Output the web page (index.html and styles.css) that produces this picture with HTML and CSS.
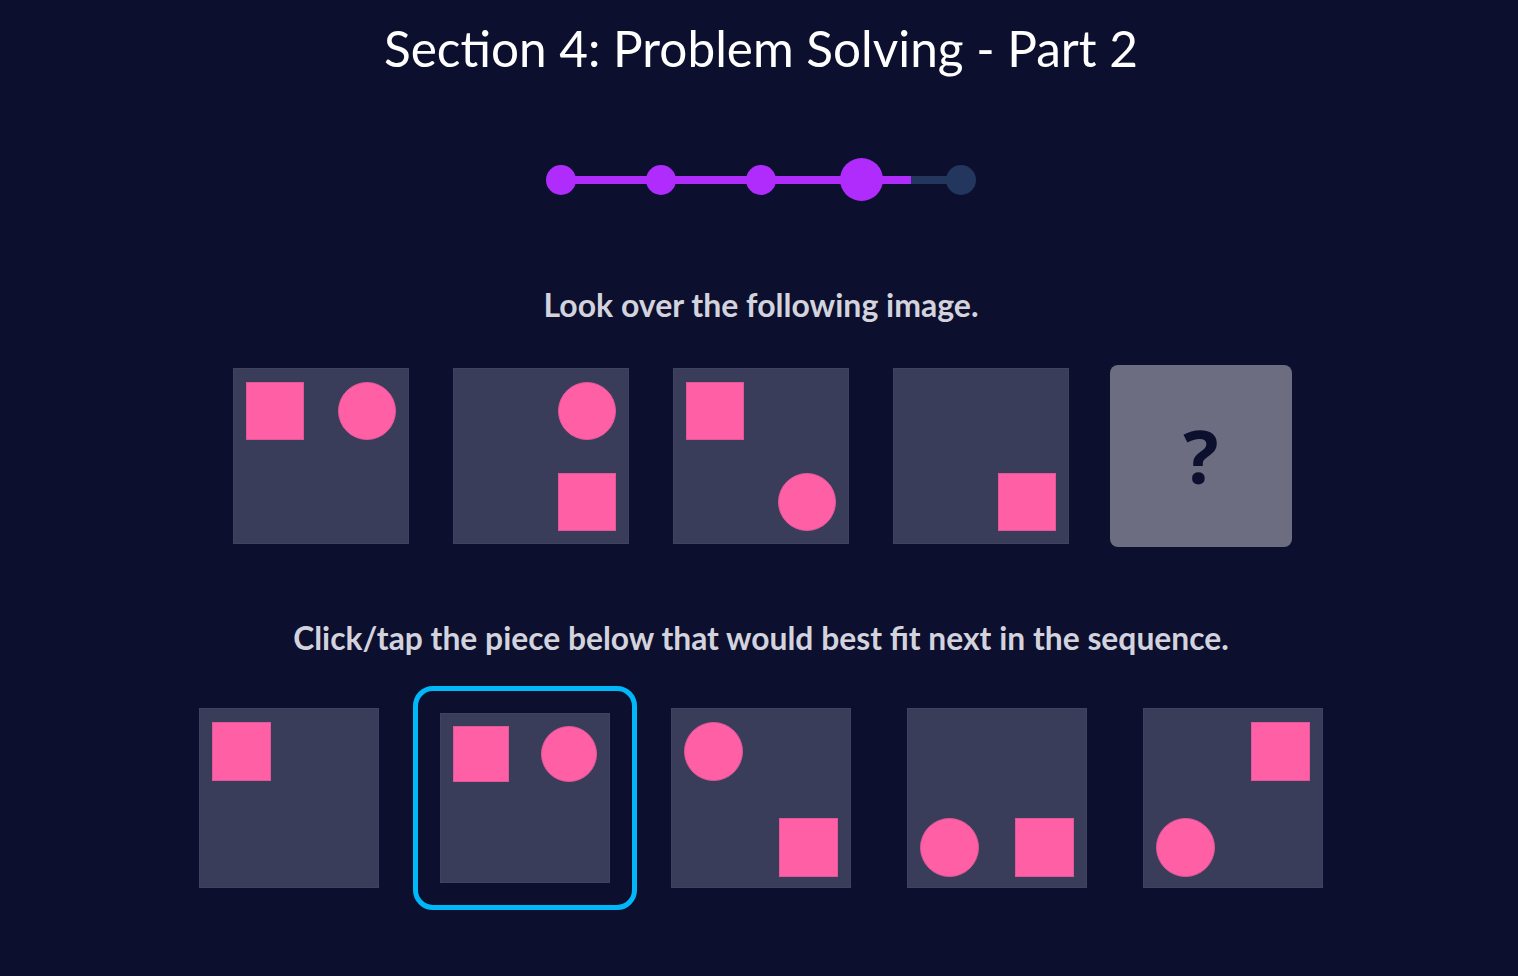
FILE: index.html
```html
<!DOCTYPE html>
<html lang="en">
<head>
<meta charset="utf-8">
<title>Section 4: Problem Solving - Part 2</title>
<link rel="stylesheet" href="styles.css">
</head>
<body>
<main class="page">
  <h1 class="title">Section 4: Problem Solving - Part 2</h1>

  <div class="progress">
    <span class="dot done"></span>
    <span class="dot done"></span>
    <span class="dot done"></span>
    <span class="dot current"></span>
    <span class="dot todo"></span>
  </div>

  <p class="prompt prompt-look">Look over the following image.</p>

  <div class="sequence">
    <div class="tile">
      <span class="shape square tl"></span>
      <span class="shape circle tr"></span>
    </div>
    <div class="tile">
      <span class="shape circle tr"></span>
      <span class="shape square br"></span>
    </div>
    <div class="tile">
      <span class="shape square tl"></span>
      <span class="shape circle br"></span>
    </div>
    <div class="tile">
      <span class="shape square br"></span>
    </div>
    <div class="tile tile-question"><span class="qmark">?</span></div>
  </div>

  <p class="prompt prompt-pick">Click/tap the piece below that would best fit next in the sequence.</p>

  <div class="options">
    <div class="option">
      <div class="tile tile-option">
        <span class="shape square tl"></span>
      </div>
    </div>
    <div class="option selected">
      <div class="tile tile-option">
        <span class="shape square tl"></span>
        <span class="shape circle tr"></span>
      </div>
    </div>
    <div class="option">
      <div class="tile tile-option">
        <span class="shape circle tl"></span>
        <span class="shape square br"></span>
      </div>
    </div>
    <div class="option">
      <div class="tile tile-option">
        <span class="shape circle bl"></span>
        <span class="shape square br"></span>
      </div>
    </div>
    <div class="option">
      <div class="tile tile-option">
        <span class="shape square tr"></span>
        <span class="shape circle bl"></span>
      </div>
    </div>
  </div>
</main>
</body>
</html>
```

FILE: styles.css
```css
html, body {
  margin: 0;
  padding: 0;
  background: #0c0f2e;
}

body {
  font-family: "Lato", "Noto Sans", "Liberation Sans", sans-serif;
  color: #ffffff;
  min-height: 976px;
}

.page {
  display: flex;
  flex-direction: column;
  align-items: center;
  padding-left: 4px;
}

.title {
  margin: 0;
  padding-top: 20px;
  font-size: 49.5px;
  line-height: 56px;
  font-weight: 400;
  color: #ffffff;
  letter-spacing: 0;
}

/* progress */
.progress {
  margin-top: 82px;
  width: 500px;
  height: 43px;
  display: grid;
  grid-template-columns: repeat(5, 100px);
  align-items: center;
  justify-items: center;
  background-image: linear-gradient(to right, #b02cfc 0, #b02cfc 350px, #23365e 350px, #23365e 400px);
  background-size: 400px 8px;
  background-position: center;
  background-repeat: no-repeat;
}

.dot {
  display: block;
  width: 30px;
  height: 30px;
  border-radius: 50%;
  background: #b02cfc;
}

.dot.current {
  width: 43px;
  height: 43px;
}

.dot.todo {
  background: #23365e;
}

/* prompts */
.prompt {
  margin: 0;
  font-weight: 700;
  color: #d3d3de;
  font-size: 32px;
  line-height: 34px;
}

.prompt-look {
  margin-top: 87px;
}

.prompt-pick {
  margin-top: 77px;
  font-size: 31.8px;
}

/* tiles */
.tile {
  box-sizing: border-box;
  width: 176px;
  height: 176px;
  padding: 13px 12px 12px 12px;
  background: #3a3d59;
  border: 1px solid #3f4261;
  display: grid;
  grid-template-columns: 58px 58px;
  grid-template-rows: 58px 58px;
  justify-content: space-between;
  align-content: space-between;
}

.sequence {
  margin-top: 46px;
  display: flex;
  gap: 44px;
  align-items: center;
}

.tile-question {
  width: 182px;
  height: 182px;
  margin: -3px;
  border-radius: 8px;
  background: #6c6d80;
  border: none;
  display: flex;
  align-items: center;
  justify-content: center;
  padding: 0;
}

.qmark {
  font-family: "Open Sans", "Noto Sans", sans-serif;
  font-weight: 700;
  font-size: 74px;
  line-height: 1;
  color: #0c0f2e;
}

.shape {
  display: block;
  background: #ff5fa5;
  border: 1px solid #e0589a;
  box-sizing: border-box;
}

.circle {
  border-radius: 50%;
}

.tl { grid-area: 1 / 1; }
.tr { grid-area: 1 / 2; }
.bl { grid-area: 2 / 1; }
.br { grid-area: 2 / 2; }

/* options */
.options {
  margin-top: 31px;
  display: flex;
  gap: 12px;
}

.option {
  box-sizing: border-box;
  width: 224px;
  height: 224px;
  border: 5px solid transparent;
  border-radius: 20px;
  display: flex;
  align-items: center;
  justify-content: center;
}

.option.selected {
  border-color: #00b7fa;
}

.tile-option {
  width: 180px;
  height: 180px;
  padding: 13px 12px 10px 12px;
  grid-template-columns: 59px 59px;
  grid-template-rows: 59px 59px;
}

.option.selected .tile-option {
  width: 170px;
  height: 170px;
  padding: 12px;
  grid-template-columns: 56px 56px;
  grid-template-rows: 56px 56px;
}
```
